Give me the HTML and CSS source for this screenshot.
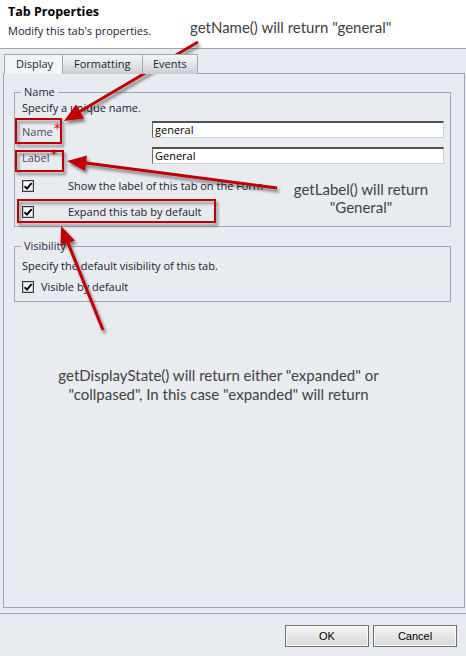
FILE: index.html
```html
<!DOCTYPE html>
<html>
<head>
<meta charset="utf-8">
<link rel="stylesheet" href="styles.css">
</head>
<body>
<div class="dialog">
  <header class="head">
    <div class="title">Tab Properties</div>
    <div class="sub">Modify this tab's properties.</div>
  </header>
  <main class="main">
    <div class="tabs">
      <div class="tab active">Display</div>
      <div class="tab">Formatting</div>
      <div class="tab">Events</div>
    </div>
    <div class="panel">
      <fieldset class="group name-group">
        <legend>Name</legend>
        <div class="hint">Specify a unique name.</div>
        <div class="field first">
          <span class="flabel">Name<span class="req">*</span></span>
          <div class="input">general</div>
        </div>
        <div class="field second">
          <span class="flabel">Label<span class="req">*</span></span>
          <div class="input">General</div>
        </div>
        <div class="check-row wide r1"><span class="cb"><svg viewBox="0 0 10 10"><path d="M1.6 5.2 L4 7.6 L8.6 2.2" /></svg></span><span class="ctext">Show the label of this tab on the Form</span></div>
        <div class="check-row wide r2"><span class="cb"><svg viewBox="0 0 10 10"><path d="M1.6 5.2 L4 7.6 L8.6 2.2" /></svg></span><span class="ctext">Expand this tab by default</span></div>
      </fieldset>
      <fieldset class="group vis-group">
        <legend>Visibility</legend>
        <div class="hint">Specify the default visibility of this tab.</div>
        <div class="check-row narrow"><span class="cb"><svg viewBox="0 0 10 10"><path d="M1.6 5.2 L4 7.6 L8.6 2.2" /></svg></span><span class="ctext">Visible by default</span></div>
      </fieldset>
    </div>
  </main>
  <footer class="foot">
    <button class="btn">OK</button>
    <button class="btn">Cancel</button>
  </footer>
</div>

<svg class="overlay" width="466" height="656" viewBox="0 0 466 656">
  <defs>
    <filter id="sh" x="-20%" y="-20%" width="140%" height="140%">
      <feDropShadow dx="2" dy="3" stdDeviation="1.6" flood-color="#000" flood-opacity="0.45"/>
    </filter>
  </defs>
  <g filter="url(#sh)" fill="none" stroke="#c00000" stroke-width="2">
    <rect x="16" y="119" width="45" height="24"/>
    <rect x="16" y="151" width="47" height="20"/>
    <rect x="18" y="200" width="197" height="22"/>
  </g>
  <g filter="url(#sh)">
    <line x1="198" y1="42" x2="79" y2="112" stroke="#c00000" stroke-width="3"/>
    <polygon points="64,121 84,118.5 76,104.5" fill="#c00000"/>
    <line x1="277" y1="188" x2="86" y2="163" stroke="#c00000" stroke-width="3"/>
    <polygon points="67,161 87,155.5 85,171" fill="#c00000"/>
    <line x1="103" y1="330" x2="68" y2="243" stroke="#c00000" stroke-width="3"/>
    <polygon points="61,226 75,240.5 60.5,246" fill="#c00000"/>
  </g>
</svg>

<div class="note note-name">getName() will return "general"</div>
<div class="note note-label">getLabel() will return<br>"General"</div>
<div class="note note-state">getDisplayState() will return either "expanded" or<br>"collpased", In this case "expanded" will return</div>
</body>
</html>
```

FILE: styles.css
```css
* { box-sizing: border-box; }
html, body { margin: 0; padding: 0; }
body {
  width: 466px;
  height: 656px;
  overflow: hidden;
  background: #e8ebf0;
  font-family: "Open Sans", "Noto Sans", sans-serif;
  font-size: 11px;
  color: #1c1c34;
  position: relative;
}
.dialog { width: 466px; height: 656px; display: flex; flex-direction: column; }

.head {
  background: #fff;
  height: 49px;
  border-bottom: 1px solid #a3a7ad;
  padding: 3px 8px 0 8px;
}
.title { font-weight: bold; font-size: 12.5px; line-height: 18px; color: #000; }
.sub { font-size: 11px; line-height: 14px; margin-top: 3px; color: #1c1c40; }

.main { padding: 5px 1px 0 3px; }
.tabs { display: flex; padding-left: 1px; height: 19px; position: relative; z-index: 1; }
.tab {
  height: 20px;
  line-height: 17px;
  border: 1px solid #a3a7ad;
  border-bottom: none;
  border-left: none;
  padding: 0 11px;
  background: linear-gradient(#f6f7f8, #dfe1e4 55%, #c9ccd1);
  color: #1c1c34;
}
.tab.active { border-left: 1px solid #a3a7ad; background: #f3f5f8; width: 59px; padding: 0 0 0 11px; }
.tab:nth-child(2) { width: 80px; }
.tab:nth-child(3) { width: 55px; padding-left: 10px; }

.panel {
  height: 535px;
  border: 1px solid #a3a7ad;
  padding: 11px 13px 0 10px;
  background: #e8ebf0;
}
.group {
  margin: 0;
  border: 1px solid #a3a7ad;
  padding: 0 6px 8px 7px;
  min-width: 0;
}
.group legend {
  padding: 0 3px;
  margin-left: -1px;
  line-height: 14px;
  color: #2a2a44;
}
.hint { line-height: 14px; margin-top: 2px; height: 14px; }
.field { display: flex; align-items: center; height: 17px; }
.field.first { margin-top: 6px; }
.field.second { margin-top: 9px; }
.flabel { width: 130px; color: #4a4a5e; padding-top: 2px; }
.req {
  color: #e60000;
  font-family: "DejaVu Sans", sans-serif;
  font-size: 14px;
  position: relative;
  top: -3px;
  margin-left: 1px;
}
.input {
  flex: 1;
  height: 17px;
  background: #fff;
  border-top: 2px solid #505050;
  border-left: 1px solid #6a6a6a;
  border-right: 1px solid #cfcfcf;
  border-bottom: 1px solid #cfcfcf;
  padding-left: 2px;
  line-height: 13px;
  color: #000;
  font-size: 11px;
}
.check-row { display: flex; align-items: center; height: 12px; }
.check-row.r1 { margin-top: 16px; }
.check-row.r2 { margin-top: 14px; }
.check-row.narrow { margin-top: 8px; }
.cb {
  width: 12px; height: 12px;
  border: 1px solid #3a3a3a;
  background: #fff;
  display: flex; align-items: center; justify-content: center;
  box-shadow: inset 0 0 0 1px #c8c8c8;
  flex: none;
}
.cb svg { width: 10px; height: 10px; }
.cb path { fill: none; stroke: #000; stroke-width: 2; }
.wide .ctext { margin-left: 34px; }
.narrow .ctext { margin-left: 7px; }
.ctext { line-height: 14px; }

.vis-group { margin-top: 12px; padding-bottom: 8px; }
.vis-group .hint { margin-top: 6px; }

.foot {
  margin-top: 5px;
  border-top: 1px solid #a3a7ad;
  display: flex;
  justify-content: flex-end;
  gap: 4px;
  padding: 11px 9px 0 0;
}
.btn {
  width: 84px;
  height: 22px;
  border: 1px solid #6f6f6f;
  background: linear-gradient(#f7f7f7, #e6e6e6 50%, #d6d6d6);
  box-shadow: inset 0 0 0 1px #fbfbfb;
  font-family: "Liberation Sans", Arial, sans-serif;
  font-size: 11px;
  color: #000;
  padding: 0;
  margin: 0;
}

.overlay { position: absolute; left: 0; top: 0; pointer-events: none; }
.note {
  position: absolute;
  font-family: "Lato", "Open Sans", sans-serif;
  font-size: 15px;
  color: #424242;
  white-space: nowrap;
}
.note-name { left: 190px; top: 18px; line-height: 18px; }
.note-label { left: 280px; top: 180px; width: 162px; text-align: center; line-height: 18px; }
.note-state { left: 18px; top: 366px; width: 401px; text-align: center; line-height: 19px; }
```
